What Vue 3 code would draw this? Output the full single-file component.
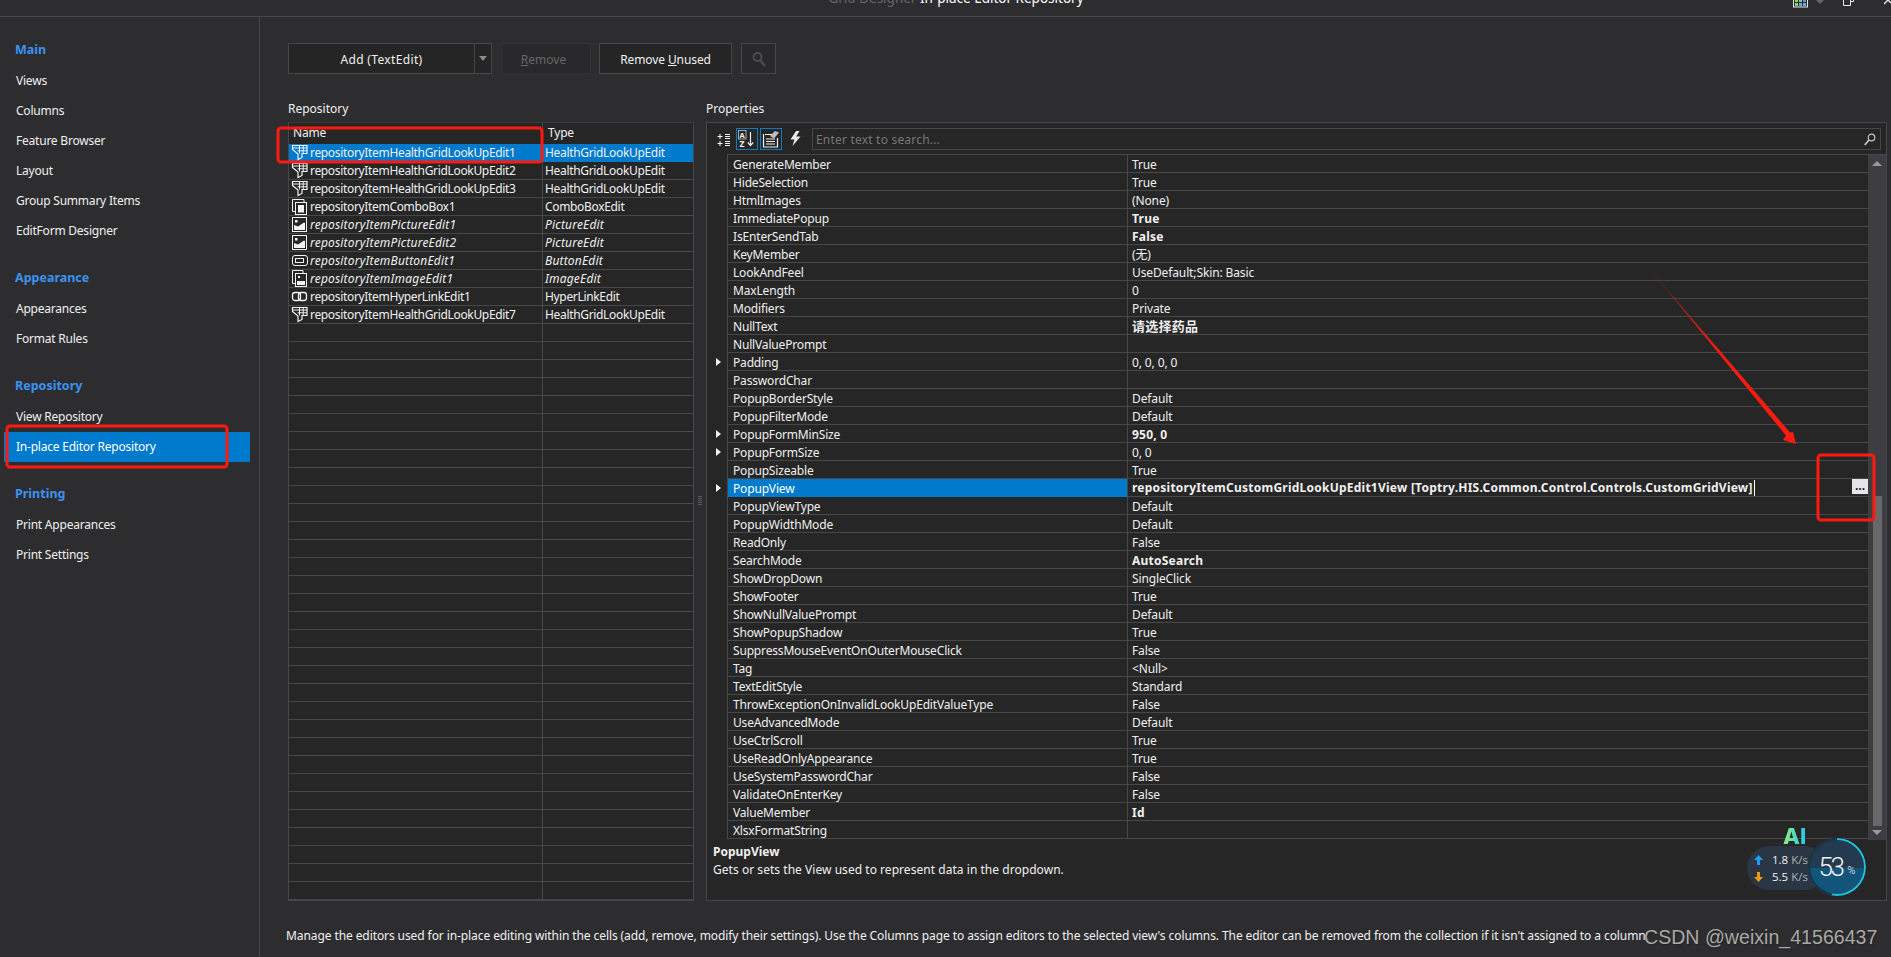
<template>
  <div class="designer">
    <header class="title-bar">
      <div class="title-text"><span class="title-dim">Grid Designer</span> In-place Editor Repository</div>
      <div class="window-icons">
        <svg class="skin-icon" width="16" height="8" viewBox="0 0 16 8">
          <rect x="0.5" y="-4" width="14" height="11" fill="none" stroke="#e8e8e8" />
          <rect x="2" y="0" width="3" height="2" fill="#8fd16f" />
          <rect x="6" y="0" width="3" height="2" fill="#8fd16f" />
          <rect x="10" y="0" width="3" height="2" fill="#7d8fc8" />
          <rect x="2" y="3" width="3" height="3" fill="#8fd16f" />
          <rect x="6" y="3" width="3" height="3" fill="#5cb0ef" />
          <rect x="10" y="3" width="3" height="3" fill="#5cb0ef" />
        </svg>
        <span class="skin-drop"></span>
        <svg class="restore-icon" width="12" height="6" viewBox="0 0 12 6">
          <path d="M0.5 -2V5.5H7.5V-2M7.5 1.5H10.5V-2" fill="none" stroke="#e8e8e8" />
        </svg>
        <svg class="close-icon" width="7" height="5" viewBox="0 0 7 5">
          <path d="M0 4L4 0M4 0L7 3" fill="none" stroke="#e8e8e8" stroke-width="1.4" />
        </svg>
      </div>
    </header>

    <div class="body">
      <aside class="sidebar">
        <section v-for="group in navGroups" :key="group.title" class="nav-group">
          <h4 class="nav-title">{{ group.title }}</h4>
          <div
            v-for="item in group.items"
            :key="item"
            :class="['nav-item', { active: item === 'In-place Editor Repository' }]"
          >{{ item }}</div>
        </section>
      </aside>

      <main class="content">
        <div class="toolbar">
          <div class="btn add-btn">
            <span class="add-label">Add (TextEdit)</span>
            <span class="add-drop"><i class="drop-arrow"></i></span>
          </div>
          <div class="btn btn-disabled remove-btn"><span><u>R</u>emove</span></div>
          <div class="btn unused-btn"><span>Remove <u>U</u>nused</span></div>
          <div class="btn btn-disabled search-btn">
            <svg width="14" height="16" viewBox="0 0 14 16">
              <circle cx="5.5" cy="6" r="4" fill="none" stroke="#4c4c4c" stroke-width="2" />
              <path d="M8.5 9.5L13 15" stroke="#4c4c4c" stroke-width="2.4" />
            </svg>
          </div>
        </div>

        <div class="panels">
          <div class="repo-col">
            <div class="panel-label">Repository</div>
            <div class="repo-grid">
              <div class="repo-head">
                <div class="repo-name">Name</div>
                <div class="repo-type">Type</div>
              </div>
              <div
                v-for="(row, i) in repoRows"
                :key="row.name"
                :class="['repo-row', { selected: i === 0, italic: row.italic }]"
              >
                <div class="repo-name">
                  <svg class="repo-icon" width="17" height="17" viewBox="0 0 17 17">
                    <template v-if="row.icon === 'lookup'">
                      <path d="M1.5 1.5H16V9.5H11V13.5L7 15.5V10L1.5 5.5Z" fill="none" stroke="#f2f2f2" stroke-width="1.2" />
                      <path d="M1.5 4H16M6.5 6.8H16M8.5 1.5V9.5M12.2 1.5V9.5" stroke="#f2f2f2" />
                    </template>
                    <template v-else-if="row.icon === 'combo'">
                      <path d="M4.5 13.5H1.5V1.5H13V4.5" fill="none" stroke="#f2f2f2" />
                      <rect x="4.5" y="4.5" width="11" height="12" fill="none" stroke="#f2f2f2" />
                      <rect x="7" y="7" width="6" height="7.5" fill="#f2f2f2" />
                    </template>
                    <template v-else-if="row.icon === 'picture'">
                      <rect x="1.5" y="1.5" width="14" height="14" fill="none" stroke="#f2f2f2" />
                      <path d="M3 14V9L7 10.5L13 6.5L14 7V14Z" fill="#f2f2f2" />
                      <rect x="4" y="4" width="2.5" height="2.5" fill="#f2f2f2" />
                    </template>
                    <template v-else-if="row.icon === 'button'">
                      <rect x="1.5" y="3.5" width="15" height="10" rx="2.5" fill="none" stroke="#f2f2f2" />
                      <rect x="4.5" y="6.5" width="8" height="4" fill="none" stroke="#f2f2f2" />
                    </template>
                    <template v-else-if="row.icon === 'image'">
                      <path d="M4.5 13.5H1.5V0.5H12V3.5" fill="none" stroke="#f2f2f2" />
                      <rect x="4.5" y="3.5" width="11" height="13" fill="none" stroke="#f2f2f2" />
                      <rect x="7" y="6" width="2" height="2" fill="#f2f2f2" />
                      <path d="M6 15V11H14V15Z" fill="#f2f2f2" />
                    </template>
                    <template v-else>
                      <rect x="1.5" y="4.5" width="8" height="8" rx="2.5" fill="none" stroke="#f2f2f2" stroke-width="1.3" />
                      <rect x="7.5" y="4.5" width="8" height="8" rx="2.5" fill="none" stroke="#f2f2f2" stroke-width="1.3" />
                    </template>
                  </svg>
                  <span>{{ row.name }}</span>
                </div>
                <div class="repo-type">{{ row.type }}</div>
              </div>
              <div v-for="n in 32" :key="'empty' + n" class="repo-row">
                <div class="repo-name"></div>
                <div class="repo-type"></div>
              </div>
            </div>
          </div>

          <div class="splitter"><i v-for="n in 5" :key="n"></i></div>

          <div class="props-col">
            <div class="panel-label">Properties</div>
            <div class="props-panel">
              <div class="props-tools">
                <svg class="tool-plain" width="14" height="14" viewBox="0 0 14 14">
                  <path d="M0.5 3.5H5.5M3 1V6M0.5 10.5H5.5M3 8V13M8 1.5H13M8 3.5H13M8 5.5H13M8 8.5H13M8 10.5H13M8 12.5H13" stroke="#f0f0f0" stroke-width="1.1" />
                </svg>
                <div class="tool-btn">
                  <svg width="18" height="18" viewBox="0 0 18 18">
                    <rect x="0.5" y="0.5" width="7.5" height="8.5" fill="none" stroke="#c8c8c8" stroke-width="0.8" />
                    <text x="1.6" y="7.6" class="az-text">A</text>
                    <text x="1.6" y="17" class="az-text az-big">Z</text>
                    <path d="M12.5 2V15M9.8 12.5L12.5 15.5L15.2 12.5" fill="none" stroke="#f0f0f0" stroke-width="1.2" />
                  </svg>
                </div>
                <div class="tool-btn">
                  <svg width="18" height="18" viewBox="0 0 18 18">
                    <path d="M3 4.5H10M1.5 4V17H15.5V8" fill="none" stroke="#f0f0f0" stroke-width="1.2" />
                    <path d="M4 9H13M4 11.5H13M4 14H13" stroke="#f0f0f0" stroke-width="1.2" />
                    <path d="M8 6L13 1L17 2.5L12 8.5Z" fill="#bdbdbd" />
                  </svg>
                </div>
                <svg class="tool-bolt" width="11" height="15" viewBox="0 0 11 15">
                  <path d="M6 0L0.5 8.5H4.5L2.5 15L10.5 5.5H6.2L9.5 0Z" fill="#ececec" />
                </svg>
                <div class="search-box">
                  <span>Enter text to search...</span>
                  <svg width="12" height="13" viewBox="0 0 12 13">
                    <circle cx="7.5" cy="4.5" r="3.3" fill="none" stroke="#c4c4c4" stroke-width="1.2" />
                    <path d="M5 7L0.8 12" stroke="#c4c4c4" stroke-width="1.8" />
                  </svg>
                </div>
              </div>
              <div class="props-top-line"></div>

              <div class="props-body">
                <div class="props-list">
                  <div
                    v-for="row in propRows"
                    :key="row.name"
                    :class="['prop-row', { selected: row.name === 'PopupView' }]"
                  >
                    <div class="prop-gutter"><i v-if="row.expand" class="expand"></i></div>
                    <div class="prop-name">{{ row.name }}</div>
                    <div :class="['prop-value', { bold: row.bold, cjk: row.name === 'NullText' }]">
                      <span v-if="row.name === 'PopupView'" class="caret-text">{{ row.value }}</span>
                      <template v-else>{{ row.value }}</template>
                      <span v-if="row.name === 'PopupView'" class="dots-btn">...</span>
                    </div>
                  </div>
                </div>
                <div class="scrollbar">
                  <i class="scroll-up"></i>
                  <div class="scroll-thumb"></div>
                  <i class="scroll-down"></i>
                </div>
              </div>

              <div class="props-desc">
                <div class="desc-title">PopupView</div>
                <div class="desc-text">Gets or sets the View used to represent data in the dropdown.</div>
              </div>
            </div>
          </div>
        </div>

        <p class="help-text">Manage the editors used for in-place editing within the cells (add, remove, modify their settings). Use the Columns page to assign editors to the selected view's columns. The editor can be removed from the collection if it isn't assigned to a column.</p>
      </main>
    </div>

    <!-- annotations drawn on top of the screenshot -->
    <svg class="marks" width="1891" height="957" viewBox="0 0 1891 957">
      <defs>
        <linearGradient id="arrowFade" gradientUnits="userSpaceOnUse" x1="1647" y1="266" x2="1720" y2="352">
          <stop offset="0" stop-color="#ff1a10" stop-opacity="0.1" />
          <stop offset="1" stop-color="#ff1a10" />
        </linearGradient>
      </defs>
      <rect x="7" y="426" width="220" height="41" rx="3" class="mark-box" />
      <rect x="278" y="128" width="264" height="34" rx="3" class="mark-box" />
      <rect x="1818" y="455" width="56" height="65" rx="3" class="mark-box" />
      <polygon points="1647,266 1790,432.4 1793,432 1796,444 1783,440 1786,435.6" fill="url(#arrowFade)" />
    </svg>

    <div class="net-meter">
      <div class="ai-mark">AI</div>
      <div class="net-pill">
        <div class="net-line">
          <svg width="9" height="10" viewBox="0 0 9 10"><path d="M4.5 0L9 5H6V10H3V5H0Z" fill="#1e9df0" /></svg>
          <b>1.8</b><em>K/s</em>
        </div>
        <div class="net-line">
          <svg width="9" height="10" viewBox="0 0 9 10"><path d="M4.5 10L9 5H6V0H3V5H0Z" fill="#f09a10" /></svg>
          <b>5.5</b><em>K/s</em>
        </div>
      </div>
      <div class="net-circle">
        <div class="net-water"></div>
        <svg class="net-ring" width="58" height="58" viewBox="0 0 58 58">
          <circle cx="29" cy="29" r="28" fill="none" stroke="#1a3242" stroke-width="2" />
          <circle cx="29" cy="29" r="28" fill="none" stroke="#1cc4de" stroke-width="2" stroke-dasharray="93 176" transform="rotate(-90 29 29)" />
        </svg>
        <div class="net-percent"><span>53</span><small>%</small></div>
      </div>
    </div>

    <div class="watermark">CSDN @weixin_41566437</div>
  </div>
</template>

<script setup>
const navGroups = [
  { title: 'Main', items: ['Views', 'Columns', 'Feature Browser', 'Layout', 'Group Summary Items', 'EditForm Designer'] },
  { title: 'Appearance', items: ['Appearances', 'Format Rules'] },
  { title: 'Repository', items: ['View Repository', 'In-place Editor Repository'] },
  { title: 'Printing', items: ['Print Appearances', 'Print Settings'] }
]

const repoRows = [
  { name: 'repositoryItemHealthGridLookUpEdit1', type: 'HealthGridLookUpEdit', icon: 'lookup' },
  { name: 'repositoryItemHealthGridLookUpEdit2', type: 'HealthGridLookUpEdit', icon: 'lookup' },
  { name: 'repositoryItemHealthGridLookUpEdit3', type: 'HealthGridLookUpEdit', icon: 'lookup' },
  { name: 'repositoryItemComboBox1', type: 'ComboBoxEdit', icon: 'combo' },
  { name: 'repositoryItemPictureEdit1', type: 'PictureEdit', icon: 'picture', italic: true },
  { name: 'repositoryItemPictureEdit2', type: 'PictureEdit', icon: 'picture', italic: true },
  { name: 'repositoryItemButtonEdit1', type: 'ButtonEdit', icon: 'button', italic: true },
  { name: 'repositoryItemImageEdit1', type: 'ImageEdit', icon: 'image', italic: true },
  { name: 'repositoryItemHyperLinkEdit1', type: 'HyperLinkEdit', icon: 'link' },
  { name: 'repositoryItemHealthGridLookUpEdit7', type: 'HealthGridLookUpEdit', icon: 'lookup' }
]

const propRows = [
  { name: 'GenerateMember', value: 'True' },
  { name: 'HideSelection', value: 'True' },
  { name: 'HtmlImages', value: '(None)' },
  { name: 'ImmediatePopup', value: 'True', bold: true },
  { name: 'IsEnterSendTab', value: 'False', bold: true },
  { name: 'KeyMember', value: '(无)' },
  { name: 'LookAndFeel', value: 'UseDefault;Skin: Basic' },
  { name: 'MaxLength', value: '0' },
  { name: 'Modifiers', value: 'Private' },
  { name: 'NullText', value: '请选择药品', bold: true },
  { name: 'NullValuePrompt', value: '' },
  { name: 'Padding', value: '0, 0, 0, 0', expand: true },
  { name: 'PasswordChar', value: '' },
  { name: 'PopupBorderStyle', value: 'Default' },
  { name: 'PopupFilterMode', value: 'Default' },
  { name: 'PopupFormMinSize', value: '950, 0', bold: true, expand: true },
  { name: 'PopupFormSize', value: '0, 0', expand: true },
  { name: 'PopupSizeable', value: 'True' },
  { name: 'PopupView', value: 'repositoryItemCustomGridLookUpEdit1View [Toptry.HIS.Common.Control.Controls.CustomGridView]', bold: true, expand: true },
  { name: 'PopupViewType', value: 'Default' },
  { name: 'PopupWidthMode', value: 'Default' },
  { name: 'ReadOnly', value: 'False' },
  { name: 'SearchMode', value: 'AutoSearch', bold: true },
  { name: 'ShowDropDown', value: 'SingleClick' },
  { name: 'ShowFooter', value: 'True' },
  { name: 'ShowNullValuePrompt', value: 'Default' },
  { name: 'ShowPopupShadow', value: 'True' },
  { name: 'SuppressMouseEventOnOuterMouseClick', value: 'False' },
  { name: 'Tag', value: '<Null>' },
  { name: 'TextEditStyle', value: 'Standard' },
  { name: 'ThrowExceptionOnInvalidLookUpEditValueType', value: 'False' },
  { name: 'UseAdvancedMode', value: 'Default' },
  { name: 'UseCtrlScroll', value: 'True' },
  { name: 'UseReadOnlyAppearance', value: 'True' },
  { name: 'UseSystemPasswordChar', value: 'False' },
  { name: 'ValidateOnEnterKey', value: 'False' },
  { name: 'ValueMember', value: 'Id', bold: true },
  { name: 'XlsxFormatString', value: '' }
]
</script>

<style>
html, body {
  margin: 0;
  background: #2d2d30;
}
</style>

<style scoped>
.designer {
  position: relative;
  width: 1891px;
  height: 957px;
  overflow: hidden;
  display: flex;
  flex-direction: column;
  background: #2d2d30;
  color: #f0f0f0;
  font-family: "Noto Sans", "Noto Sans CJK SC", sans-serif;
  font-size: 12px;
}

.title-bar {
  height: 16px;
  flex-shrink: 0;
  border-bottom: 1px solid #47474a;
  display: flex;
  justify-content: center;
  overflow: hidden;
  position: relative;
}

.title-text {
  font-size: 13.5px;
  line-height: 14px;
  height: 14px;
  margin-top: -9px;
  margin-left: 21px;
  color: #fff;
  white-space: nowrap;
}

.title-dim {
  color: #666;
}

.window-icons {
  position: absolute;
  right: 0;
  top: 0;
  display: flex;
  align-items: flex-start;
}

.skin-drop {
  width: 0;
  height: 0;
  margin: 0 0 0 7px;
  border: 4px solid transparent;
  border-top-color: #666;
  border-bottom: 0;
}

.restore-icon {
  margin-left: 19px;
}

.close-icon {
  margin-left: 29px;
}

.body {
  flex: 1;
  display: flex;
  min-height: 0;
}

.sidebar {
  width: 259px;
  flex-shrink: 0;
  border-right: 1px solid #47474a;
  padding-top: 18px;
  box-sizing: content-box;
}

.nav-group {
  margin-bottom: 17px;
}

.nav-title {
  margin: 0;
  height: 31px;
  line-height: 30px;
  padding-left: 15px;
  font-size: 12.5px;
  font-weight: 700;
  color: #3b92f0;
}

.nav-item {
  height: 30px;
  line-height: 30px;
  margin: 0 9px 0 4px;
  padding-left: 12px;
  color: #efefef;
  letter-spacing: -0.22px;
}

.nav-item.active {
  background: #007acc;
  color: #fff;
}

.content {
  flex: 1;
  min-width: 0;
  padding: 26px 4px 0 26px;
  display: flex;
  flex-direction: column;
}

.toolbar {
  display: flex;
  gap: 8px;
  height: 31px;
  margin-left: 2px;
  margin-bottom: 26px;
}

.btn {
  box-sizing: border-box;
  height: 31px;
  border: 1px solid #47474a;
  background: #252526;
  display: flex;
  align-items: center;
  justify-content: center;
  color: #f0f0f0;
}

.btn > span {
  padding-top: 2px;
}

.btn-disabled {
  background: #29292b;
  border-color: #323234;
  color: #666;
}

.add-btn {
  width: 204px;
  justify-content: flex-start;
}

.add-label {
  flex: 1;
  text-align: center;
  letter-spacing: 0.35px;
}

.btn > .add-drop {
  width: 16px;
  height: 100%;
  padding-top: 0;
  border-left: 1px solid #47474a;
  display: flex;
  align-items: center;
  justify-content: center;
}

.drop-arrow {
  width: 0;
  height: 0;
  border: 4px solid transparent;
  border-top: 5px solid #8a8a8a;
  border-bottom: 0;
}

.remove-btn {
  width: 90px;
  margin-left: 1px;
  padding-right: 5px;
}

.unused-btn {
  width: 133px;
  letter-spacing: -0.1px;
}

.search-btn {
  width: 35px;
  border-color: #47474a;
  margin-left: 1px;
}

.panels {
  display: flex;
  height: 801px;
}

.repo-col {
  width: 406px;
  margin-left: 2px;
  flex-shrink: 0;
}

.panel-label {
  height: 18px;
  line-height: 18px;
  margin-bottom: 4px;
}

.repo-grid {
  box-sizing: border-box;
  height: 779px;
  border: 1px solid #47474a;
  border-top-color: #3a3a3c;
  background: #262626;
  overflow: hidden;
}

.repo-head {
  display: flex;
  height: 21px;
  line-height: 19px;
}

.repo-head .repo-name,
.repo-head .repo-type {
  padding-left: 4px;
  letter-spacing: -0.2px;
  align-items: flex-start;
}

.repo-head .repo-type {
  padding-left: 5px;
}

.repo-row {
  display: flex;
  box-sizing: border-box;
  height: 18px;
  line-height: 17px;
  border-bottom: 1px solid #47474a;
  white-space: nowrap;
  letter-spacing: -0.33px;
}

.repo-row.selected {
  background: #007acc;
  border-bottom-color: #007acc;
}

.repo-row.selected .repo-name {
  border-right-color: #007acc;
}

.repo-row.italic {
  font-style: italic;
  letter-spacing: 0.18px;
}

.repo-name {
  width: 254px;
  flex-shrink: 0;
  box-sizing: border-box;
  border-right: 1px solid #47474a;
  display: flex;
  align-items: center;
  gap: 2px;
  padding-left: 2px;
}

.repo-head .repo-name {
  border-right-color: #47474a;
}

.repo-type {
  flex: 1;
  padding-left: 2px;
}

.repo-icon {
  flex-shrink: 0;
}

.splitter {
  width: 12px;
  flex-shrink: 0;
  display: flex;
  flex-direction: column;
  align-items: center;
  justify-content: center;
  gap: 1px;
}

.splitter i {
  width: 4px;
  height: 1px;
  background: #5a5a5c;
}

.props-col {
  flex: 1;
  min-width: 0;
}

.props-panel {
  box-sizing: border-box;
  height: 779px;
  border: 1px solid #47474a;
  background: #262626;
  display: flex;
  flex-direction: column;
}

.props-tools {
  height: 31px;
  flex-shrink: 0;
  display: flex;
  align-items: flex-start;
  padding: 5px 5px 0 10px;
  box-sizing: border-box;
}

.props-top-line {
  height: 1px;
  flex-shrink: 0;
  margin-left: 20px;
  background: #47474a;
}

.tool-plain {
  margin: 5px 5px 0 0;
  flex-shrink: 0;
}

.tool-btn {
  box-sizing: border-box;
  width: 22px;
  height: 22px;
  border: 1px solid #0e7ac4;
  margin-right: 2px;
  display: flex;
  align-items: center;
  justify-content: center;
  flex-shrink: 0;
}

.az-text {
  font-size: 7.5px;
  font-weight: 700;
  fill: #f0f0f0;
}

.az-big {
  font-size: 8.5px;
}

.tool-bolt {
  margin: 3px 11px 0 6px;
  flex-shrink: 0;
}

.search-box {
  box-sizing: border-box;
  flex: 1;
  height: 22px;
  border: 1px solid #47474a;
  display: flex;
  align-items: center;
  justify-content: space-between;
  padding: 0 4px 0 3px;
  color: #777;
  letter-spacing: 0.2px;
}

.props-body {
  flex: 1;
  min-height: 0;
  display: flex;
}

.props-list {
  flex: 1;
  min-width: 0;
}

.prop-row {
  display: flex;
  height: 18px;
  box-sizing: border-box;
  line-height: 17px;
  white-space: nowrap;
}

.prop-gutter {
  width: 20px;
  flex-shrink: 0;
  display: flex;
  align-items: center;
  justify-content: center;
  padding-left: 2px;
  box-sizing: border-box;
}

.expand {
  width: 0;
  height: 0;
  border: 4px solid transparent;
  border-left: 5px solid #f0f0f0;
  border-right: 0;
}

.prop-name {
  box-sizing: border-box;
  width: 401px;
  flex-shrink: 0;
  padding: 1px 0 0 5px;
  border-left: 1px solid #47474a;
  border-right: 1px solid #47474a;
  border-bottom: 1px solid #47474a;
  letter-spacing: -0.17px;
}

.prop-value {
  flex: 1;
  min-width: 0;
  box-sizing: border-box;
  padding: 1px 0 0 4px;
  border-bottom: 1px solid #47474a;
  display: flex;
  justify-content: space-between;
  letter-spacing: -0.12px;
}

.bold {
  font-weight: 700;
  letter-spacing: 0.24px;
}

.cjk {
  font-size: 13px;
}

.prop-row.selected .prop-name {
  background: #007acc;
  border-bottom-color: #007acc;
  color: #fff;
}

.caret-text {
  border-right: 1px solid #fff;
  padding-right: 1px;
  height: 16px;
  line-height: 16px;
}

.dots-btn {
  box-sizing: border-box;
  width: 16px;
  height: 15px;
  margin-top: -1px;
  background: #e6e6e6;
  color: #1c1c1c;
  text-align: center;
  line-height: 14px;
  font-weight: 700;
  letter-spacing: 0;
}

.scrollbar {
  width: 18px;
  flex-shrink: 0;
  height: 685px;
  background: #3e3e42;
  display: flex;
  flex-direction: column;
  align-items: center;
  padding: 6px 0 5px;
  box-sizing: border-box;
}

.scroll-up,
.scroll-down {
  width: 0;
  height: 0;
  border: 5px solid transparent;
}

.scroll-up {
  border-bottom: 5px solid #9a9a9a;
  border-top: 0;
}

.scroll-down {
  border-top: 5px solid #9a9a9a;
  border-bottom: 0;
}

.scroll-thumb {
  width: 9px;
  height: 330px;
  margin-top: auto;
  margin-bottom: 4px;
  background: #686868;
}

.props-desc {
  height: 60px;
  flex-shrink: 0;
  padding: 3px 0 0 6px;
  box-sizing: border-box;
}

.desc-title {
  font-weight: 700;
  line-height: 18px;
}

.desc-text {
  line-height: 18px;
  letter-spacing: 0.04px;
}

.help-text {
  margin: 26px 0 0 0;
  line-height: 18px;
  white-space: nowrap;
  color: #f0f0f0;
  letter-spacing: -0.09px;
}

.marks {
  position: absolute;
  left: 0;
  top: 0;
  pointer-events: none;
}

.mark-box {
  fill: none;
  stroke: #ff1a10;
  stroke-width: 3;
}

.net-meter {
  position: absolute;
  left: 1747px;
  top: 826px;
  width: 120px;
  height: 70px;
}

.ai-mark {
  position: absolute;
  left: 36px;
  top: 0;
  font-family: "Inter", sans-serif;
  font-weight: 800;
  font-size: 22px;
  line-height: 20px;
  background: linear-gradient(90deg, #8df07a, #4fd5c8 60%, #22c8ee);
  -webkit-background-clip: text;
  background-clip: text;
  color: transparent;
}

.net-pill {
  position: absolute;
  left: 0;
  top: 20px;
  width: 80px;
  height: 44px;
  border-radius: 22px;
  background: #2a3644;
  box-sizing: border-box;
  padding: 5px 0 0 7px;
}

.net-line {
  display: flex;
  align-items: center;
  height: 17px;
  font-size: 11.5px;
  color: #f0f0f0;
  font-family: "Open Sans", sans-serif;
}

.net-line b {
  font-weight: 400;
  margin-left: 9px;
}

.net-line em {
  font-style: normal;
  margin-left: 3px;
  color: #a8b0b8;
}

.net-circle {
  position: absolute;
  left: 61px;
  top: 12px;
  width: 58px;
  height: 58px;
  border-radius: 50%;
  background: #243a4e;
  overflow: hidden;
}

.net-water {
  position: absolute;
  left: 0;
  right: 0;
  bottom: 0;
  height: 48%;
  background: #12557a;
}

.net-ring {
  position: absolute;
  left: 0;
  top: 0;
}

.net-percent {
  position: absolute;
  inset: 0;
  display: flex;
  align-items: center;
  justify-content: center;
  font-family: "Roboto", sans-serif;
  font-weight: 300;
  font-size: 26px;
  color: #f4f4f4;
}

.net-percent span {
  display: inline-block;
  letter-spacing: -2.5px;
}

.net-percent small {
  font-size: 11px;
  margin-left: 5px;
  margin-top: 6px;
}

.watermark {
  position: absolute;
  left: 1644px;
  top: 925px;
  font-family: "Liberation Sans", sans-serif;
  font-size: 19.6px;
  line-height: 24px;
  color: #a8a8a8;
  text-shadow: 1px 1px 1px #222;
  white-space: nowrap;
}
</style>
